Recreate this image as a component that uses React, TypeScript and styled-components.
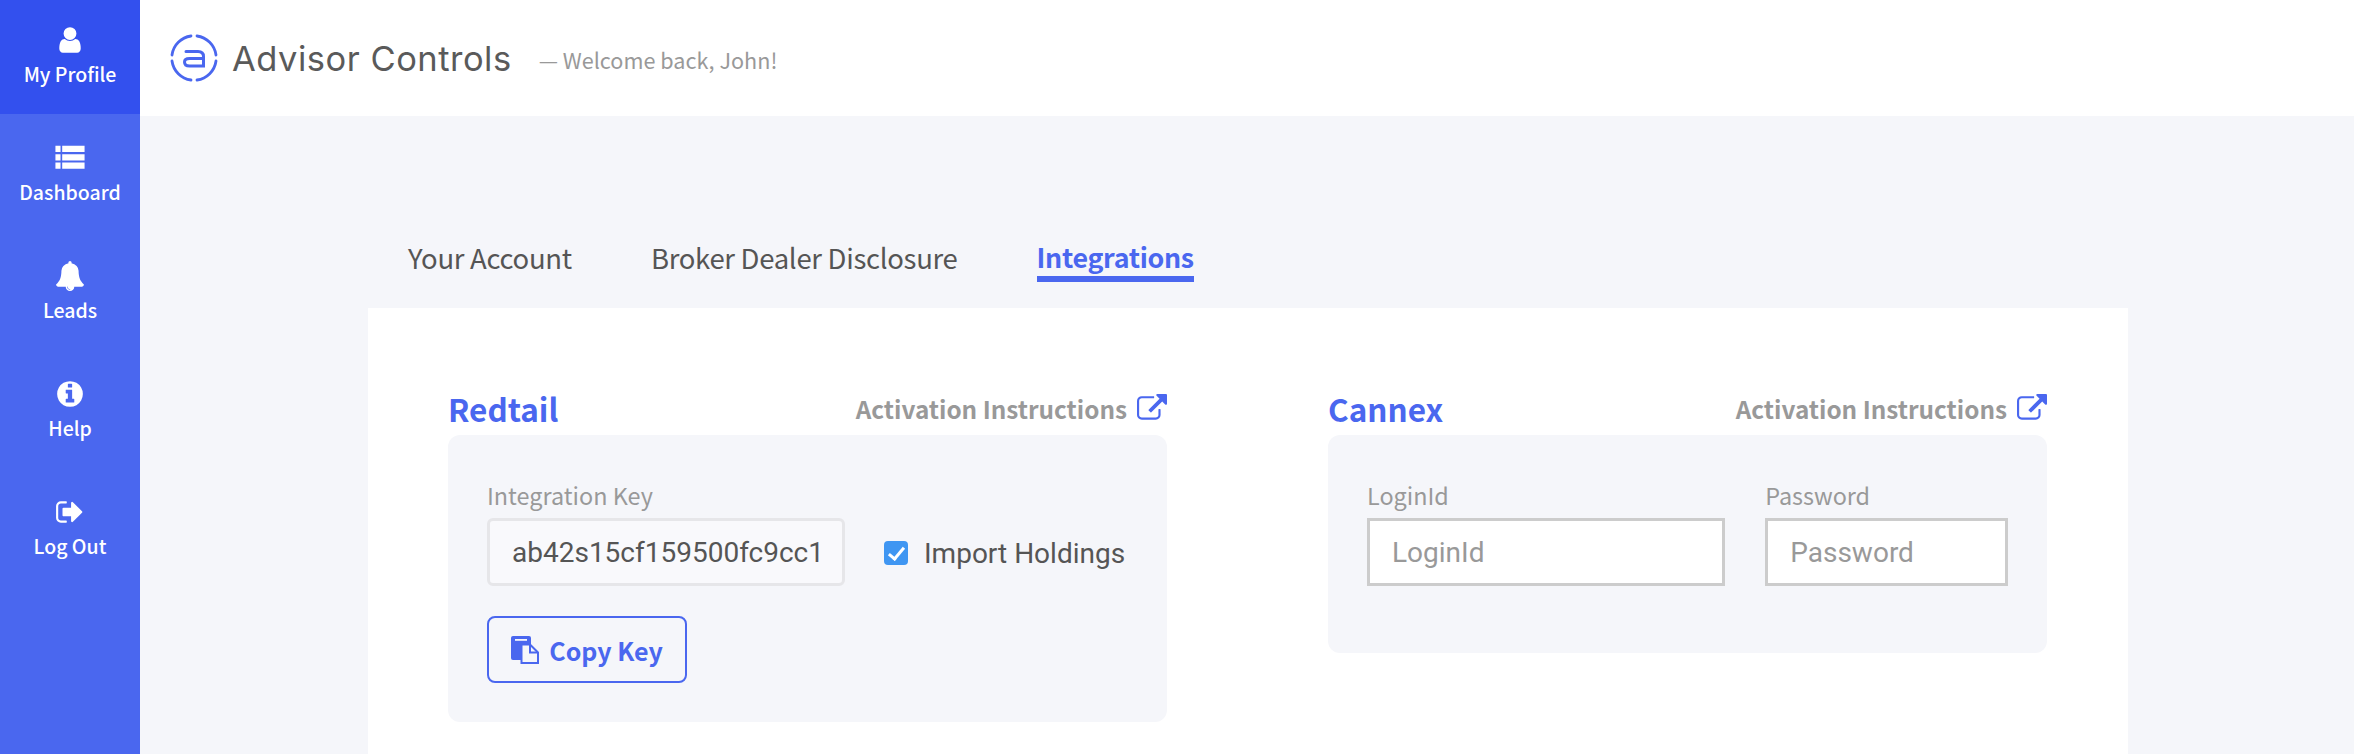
import { useState } from "react"
import type { ReactNode } from "react"
import styled, { createGlobalStyle } from "styled-components"

const sans = `"Noto Sans CJK JP", "Noto Sans", sans-serif`
const blue = "#4a67ef"
const wash = "#f5f6fa"

const GlobalStyle = createGlobalStyle`
  html, body {
    margin: 0;
    height: 100%;
    overflow: hidden;
    background: ${wash};
  }
  * {
    box-sizing: border-box;
  }
`

const Shell = styled.div`
  display: flex;
  height: 754px;
  overflow: hidden;
  font-family: ${sans};
`

const Sidebar = styled.nav`
  width: 140px;
  flex-shrink: 0;
  background: ${blue};
`

const NavItem = styled.a<{ $active?: boolean }>`
  display: flex;
  flex-direction: column;
  align-items: center;
  height: ${(p) => (p.$active ? "114px" : "118px")};
  padding-top: ${(p) => (p.$active ? "25px" : "29px")};
  background: ${(p) => (p.$active ? "#3350ee" : "transparent")};
  color: #fff;
  font-size: 19.5px;
  font-weight: 500;
  line-height: 30px;
  white-space: nowrap;
`

const NavIcon = styled.svg`
  width: 30px;
  height: 30px;
  margin-bottom: 4px;
  fill: #fff;
`

const Content = styled.div`
  flex: 1;
  min-width: 0;
`

const Header = styled.header`
  display: flex;
  align-items: center;
  height: 116px;
  padding-left: 30px;
  background: #fff;
`

const LogoMark = styled.svg`
  width: 48px;
  height: 48px;
  margin-right: 14px;
`

const AppName = styled.span`
  font-family: Inter, sans-serif;
  font-size: 34.5px;
  font-weight: 400;
  letter-spacing: 0.5px;
  color: #5a5a5a;
`

const Welcome = styled.span`
  margin-left: 27px;
  margin-top: 3px;
  font-size: 21.6px;
  color: #999;
`

const Main = styled.main`
  width: 1760px;
  margin-left: 228px;
  padding-top: 122px;
`

const Tabs = styled.div`
  display: flex;
  gap: 79px;
  padding-left: 40px;
  margin-bottom: 26px;
`

const Tab = styled.a<{ $active?: boolean }>`
  height: 44px;
  border-bottom: 6px solid ${(p) => (p.$active ? blue : "transparent")};
  color: ${(p) => (p.$active ? blue : "#555")};
  font-size: ${(p) => (p.$active ? "26.8px" : "27.5px")};
  font-weight: ${(p) => (p.$active ? 700 : 400)};
  letter-spacing: -0.3px;
  line-height: 38px;
  white-space: nowrap;
`

const Card = styled.section`
  display: grid;
  grid-template-columns: 719px 719px;
  column-gap: 161px;
  min-height: 500px;
  padding: 80px 80px 0;
  background: #fff;
`

const PanelHead = styled.div`
  display: flex;
  align-items: flex-start;
  justify-content: space-between;
  height: 47px;
`

const PanelTitle = styled.h2`
  margin: 0;
  font-size: 31.5px;
  font-weight: 700;
  line-height: 40px;
  color: ${blue};
`

const HeadLink = styled.a`
  display: flex;
  align-items: center;
  gap: 10px;
  font-size: 24.3px;
  font-weight: 700;
  line-height: 42px;
  color: #999;
`

const LinkIcon = styled.svg`
  width: 30px;
  height: 30px;
  fill: ${blue};
`

const PanelBody = styled.div<{ $height: number }>`
  height: ${(p) => p.$height}px;
  padding: 40px 39px 0;
  border-radius: 12px;
  background: ${wash};
`

const FieldRow = styled.div`
  display: flex;
  align-items: flex-end;
  gap: 40px;
`

const Field = styled.label<{ $width: number }>`
  display: block;
  width: ${(p) => p.$width}px;
`

const FieldLabel = styled.span`
  display: block;
  height: 43px;
  font-size: 23.4px;
  line-height: 40px;
  color: #999;
`

const TextInput = styled.input<{ $locked?: boolean }>`
  display: block;
  width: 100%;
  height: 68px;
  padding: 0 8px 0 22px;
  border: 3px solid ${(p) => (p.$locked ? "#e6e6e9" : "#cccccc")};
  border-radius: ${(p) => (p.$locked ? "6px" : "0")};
  outline: none;
  background: ${(p) => (p.$locked ? "#f9f9fc" : "#fff")};
  font-family: Roboto, sans-serif;
  font-size: 28px;
  color: #555;

  &::placeholder {
    color: #999;
    opacity: 1;
  }
`

const CheckLabel = styled.label`
  display: flex;
  align-items: center;
  gap: 16px;
  height: 68px;
  padding-top: 2px;
  margin-left: -1px;
  font-family: Roboto, sans-serif;
  font-size: 28px;
  color: #555;
  white-space: nowrap;
`

const CheckBox = styled.input`
  position: relative;
  width: 24px;
  height: 24px;
  margin: 0;
  appearance: none;
  border-radius: 4px;
  background: #3f96f2;

  &:checked::after {
    content: "";
    position: absolute;
    left: 8px;
    top: 3px;
    width: 6px;
    height: 13px;
    border: solid #fff;
    border-width: 0 3px 3px 0;
    transform: rotate(40deg);
  }
`

const CopyButton = styled.button`
  display: flex;
  align-items: center;
  justify-content: center;
  gap: 10px;
  width: 200px;
  height: 67px;
  margin-top: 30px;
  border: 2px solid ${blue};
  border-radius: 8px;
  background: transparent;
  font-family: ${sans};
  font-size: 25px;
  font-weight: 700;
  color: ${blue};
`

const CopyIcon = styled.svg`
  width: 28px;
  height: 28px;
  flex-shrink: 0;
`

const Glyph = ({ d }: { d: string }) => (
  <NavIcon viewBox="0 0 1792 1792">
    <path d={d} />
  </NavIcon>
)

const navItems: { label: string; d: string; active?: boolean }[] = [
  {
    label: "My Profile",
    active: true,
    d: "M1536 1399q0 109-62.5 187t-150.5 78h-854q-88 0-150.5-78t-62.5-187q0-85 8.5-160.5t31.5-152 58.5-131 94-89 134.5-34.5q131 128 313 128t313-128q76 0 134.5 34.5t94 89 58.5 131 31.5 152 8.5 160.5zm-256-887q0 159-112.5 271.5t-271.5 112.5-271.5-112.5-112.5-271.5 112.5-271.5 271.5-112.5 271.5 112.5 112.5 271.5z",
  },
  {
    label: "Dashboard",
    d: "M26 170h304v370h-304zM430 170h1336v370h-1336zM26 670h304v370h-304zM430 670h1336v370h-1336zM26 1170h304v370h-304zM430 1170h1336v370h-1336z",
  },
  {
    label: "Leads",
    d: "M912 1696q0-16-16-16-59 0-101.5-42.5t-42.5-101.5q0-16-16-16t-16 16q0 73 51.5 124.5t124.5 51.5q16 0 16-16zm816-288q0 52-38 90t-90 38h-448q0 106-75 181t-181 75-181-75-75-181h-448q-52 0-90-38t-38-90q50-42 91-88t85-119.5 74.5-158.5 50-206 19.5-260q0-152 117-282.5t307-158.5q-8-19-8-39 0-40 28-68t68-28 68 28 28 68q0 20-8 39 190 28 307 158.5t117 282.5q0 139 19.5 260t50 206 74.5 158.5 85 119.5 91 88z",
  },
  {
    label: "Help",
    d: "M1152 1376v-160q0-14-9-23t-23-9h-96v-512q0-14-9-23t-23-9h-320q-14 0-23 9t-9 23v160q0 14 9 23t23 9h96v320h-96q-14 0-23 9t-9 23v160q0 14 9 23t23 9h448q14 0 23-9t9-23zm-128-896v-160q0-14-9-23t-23-9h-192q-14 0-23 9t-9 23v160q0 14 9 23t23 9h192q14 0 23-9t9-23zm640 416q0 209-103 385.5t-279.5 279.5-385.5 103-385.5-103-279.5-279.5-103-385.5 103-385.5 279.5-279.5 385.5-103 385.5 103 279.5 279.5 103 385.5z",
  },
  {
    label: "Log Out",
    d: "M704 1440q0 4 1 20t.5 26.5-3 23.5-10 19.5-20.5 6.5h-320q-119 0-203.5-84.5t-84.5-203.5v-704q0-119 84.5-203.5t203.5-84.5h320q13 0 22.5 9.5t9.5 22.5q0 4 1 20t.5 26.5-3 23.5-10 19.5-20.5 6.5h-320q-66 0-113 47t-47 113v704q0 66 47 113t113 47h312l11.5 1 11.5 3 8 5.5 7 9 2 13.5zm928-544q0 26-19 45l-544 544q-19 19-45 19t-45-19-19-45v-288h-448q-26 0-45-19t-19-45v-384q0-26 19-45t45-19h448v-288q0-26 19-45t45-19 45 19l544 544q19 19 19 45z",
  },
]

const externalLink =
  "M1408 928v320q0 119-84.5 203.5t-203.5 84.5h-832q-119 0-203.5-84.5t-84.5-203.5v-832q0-119 84.5-203.5t203.5-84.5h704q14 0 23 9t9 23v64q0 14-9 23t-23 9h-704q-66 0-113 47t-47 113v832q0 66 47 113t113 47h832q66 0 113-47t47-113v-320q0-14 9-23t23-9h64q14 0 23 9t9 23zm384-864v512q0 26-19 45t-45 19-45-19l-176-176-652 652q-10 10-23 10t-23-10l-114-114q-10-10-10-23t10-23l652-652-176-176q-19-19-19-45t19-45 45-19h512q26 0 45 19t19 45z"

// four arcs around the mark, gaps at top, right, bottom and left
const Logo = () => (
  <LogoMark viewBox="0 0 48 48" fill="none" stroke={blue} strokeLinecap="round">
    <g strokeWidth="2.8">
      <path d="M21 2 A22.2 22.2 0 0 0 2 21" />
      <path d="M27 2 A22.2 22.2 0 0 1 46 21" />
      <path d="M46 27 A22.2 22.2 0 0 1 27 46" />
      <path d="M21 46 A22.2 22.2 0 0 1 2 27" />
    </g>
    <path d="M16 17.5 H28 Q33.5 17.5 33.5 22.5 V32 H19.5 Q14.5 32 14.5 28 Q14.5 24.5 19.5 24.5 H33" strokeWidth="3" />
  </LogoMark>
)

const PasteIcon = () => (
  <CopyIcon viewBox="0 0 28 28">
    <rect x="0" y="0" width="20" height="24" rx="2" fill={blue} />
    <rect x="4" y="3" width="12" height="1.8" fill={wash} />
    <path d="M10.5 8.5 H19 L27 16.5 V27 H10.5 Z" fill={wash} stroke={blue} strokeWidth="2" />
    <path d="M19 8.5 V16.5 H27" fill="none" stroke={blue} strokeWidth="2" />
  </CopyIcon>
)

const Panel = ({ title, height, children }: { title: string; height: number; children: ReactNode }) => (
  <div>
    <PanelHead>
      <PanelTitle>{title}</PanelTitle>
      <HeadLink>
        Activation Instructions
        <LinkIcon viewBox="0 0 1792 1792">
          <path d={externalLink} />
        </LinkIcon>
      </HeadLink>
    </PanelHead>
    <PanelBody $height={height}>{children}</PanelBody>
  </div>
)

export default function App() {
  const [importHoldings, setImportHoldings] = useState(true)
  const [loginId, setLoginId] = useState("")
  const [password, setPassword] = useState("")

  return (
    <Shell>
      <GlobalStyle />
      <Sidebar>
        {navItems.map((item) => (
          <NavItem key={item.label} $active={item.active}>
            <Glyph d={item.d} />
            {item.label}
          </NavItem>
        ))}
      </Sidebar>
      <Content>
        <Header>
          <Logo />
          <AppName>Advisor Controls</AppName>
          <Welcome>— Welcome back, John!</Welcome>
        </Header>
        <Main>
          <Tabs>
            <Tab>Your Account</Tab>
            <Tab>Broker Dealer Disclosure</Tab>
            <Tab $active>Integrations</Tab>
          </Tabs>
          <Card>
            <Panel title="Redtail" height={287}>
              <FieldRow>
                <Field $width={358}>
                  <FieldLabel>Integration Key</FieldLabel>
                  <TextInput $locked readOnly value="ab42s15cf159500fc9cc1" />
                </Field>
                <CheckLabel>
                  <CheckBox
                    type="checkbox"
                    checked={importHoldings}
                    onChange={(e) => setImportHoldings(e.target.checked)}
                  />
                  Import Holdings
                </CheckLabel>
              </FieldRow>
              <CopyButton>
                <PasteIcon />
                Copy Key
              </CopyButton>
            </Panel>
            <Panel title="Cannex" height={218}>
              <FieldRow>
                <Field $width={360}>
                  <FieldLabel>LoginId</FieldLabel>
                  <TextInput placeholder="LoginId" value={loginId} onChange={(e) => setLoginId(e.target.value)} />
                </Field>
                <Field $width={244}>
                  <FieldLabel>Password</FieldLabel>
                  <TextInput
                    type="password"
                    placeholder="Password"
                    value={password}
                    onChange={(e) => setPassword(e.target.value)}
                  />
                </Field>
              </FieldRow>
            </Panel>
          </Card>
        </Main>
      </Content>
    </Shell>
  )
}
